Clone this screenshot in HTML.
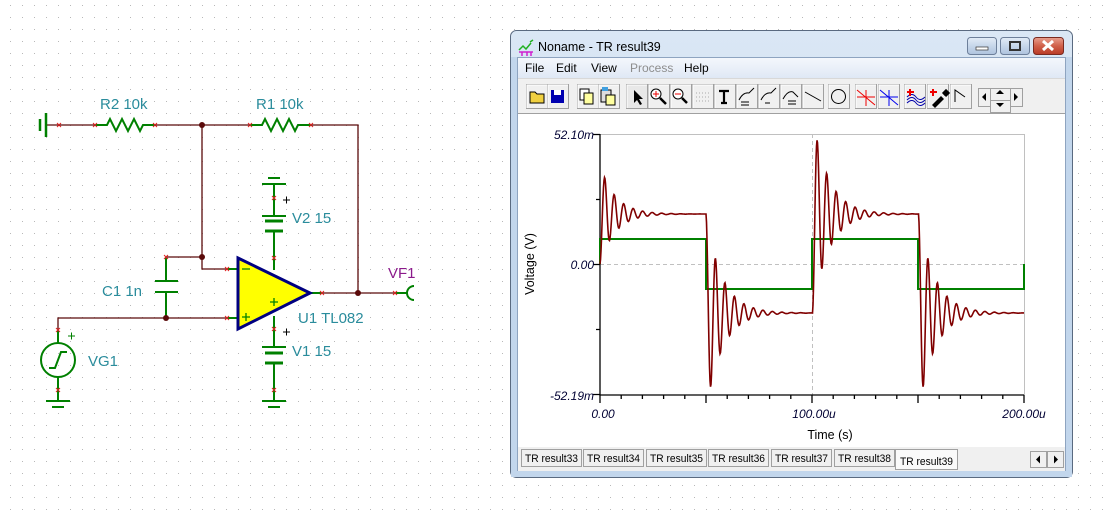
<!DOCTYPE html>
<html><head><meta charset="utf-8"><style>
html,body{margin:0;padding:0;background:#fff;}
svg{display:block;font-family:"Liberation Sans",sans-serif;}
svg text{fill:#000;}
</style></head><body>
<svg id="s" width="1106" height="511" viewBox="0 0 1106 511" xmlns="http://www.w3.org/2000/svg">
<defs>
<pattern id="dots" x="10" y="5" width="12" height="12" patternUnits="userSpaceOnUse"><rect width="1" height="1" fill="#b8b8b8"/></pattern>
<linearGradient id="tb" x1="0" y1="0" x2="0" y2="1"><stop offset="0" stop-color="#dae7f5"/><stop offset="1" stop-color="#c2d6ec"/></linearGradient>
<linearGradient id="mb" x1="0" y1="0" x2="0" y2="1"><stop offset="0" stop-color="#f4f7fc"/><stop offset="1" stop-color="#dfe8f5"/></linearGradient>
<linearGradient id="btn" x1="0" y1="0" x2="0" y2="1"><stop offset="0" stop-color="#e3ecf7"/><stop offset="0.5" stop-color="#c6d6ea"/><stop offset="1" stop-color="#aec3de"/></linearGradient>
<linearGradient id="cls" x1="0" y1="0" x2="0" y2="1"><stop offset="0" stop-color="#e8a090"/><stop offset="0.5" stop-color="#d0604a"/><stop offset="1" stop-color="#b83a25"/></linearGradient>
</defs>
<rect width="1106" height="511" fill="#fff"/>
<rect width="1106" height="511" fill="url(#dots)"/>

<g fill="none" stroke-width="1.3">
<g stroke="#5a0a0a">
<path d="M46 125H95M155 125H250M311 125H358V293M202 125V269H227M202 257H166M58 330V318H227M322 293H395"/>
</g>
<g stroke="#008000" stroke-width="2">
<path d="M40 119V131" stroke-width="2.5"/>
<path d="M46 113V137" stroke-width="2.5"/>
<path d="M95 125H107l3-6 6 12 6-12 6 12 6-12 6 12 3-6H155"/>
<path d="M250 125H262l3-6 6 12 6-12 6 12 6-12 6 12 3-6H311"/>
<path d="M166 257V281M155 281H178M155 292H178M166 292V318"/>
<path d="M227 269H238M227 318H238M310 293H322M395 293H408"/>
<path d="M414 286a7 7 0 0 0 0 14"/>
<path d="M268 178H280M262 184H286M274 184V216M262 216H286M274 231V258"/>
<path d="M265 221H283M265 231H283" stroke-width="3"/>
<path d="M274 329V347M262 347H286M274 363V401M262 401H286M268 407H280"/>
<path d="M265 353H283M265 363H283" stroke-width="3"/>
<circle cx="58" cy="360" r="17"/>
<path d="M58 330V343M58 377V401M46 401H70M52 407H64"/>
<path d="M49 368H55L61 352H67"/>
</g>
</g>
<path d="M238 258L310 293L238 329Z" fill="#ffff00" stroke="#000080" stroke-width="3"/>
<path d="M274 258V270M274 316V329" stroke="#008000" stroke-width="2"/>
<g stroke="#008000" stroke-width="1.3"><path d="M242 269H250M242 317H250M246 313V321M270 302H278M274 298V306"/></g>
<g fill="#5a0a0a"><circle cx="202" cy="125" r="3"/><circle cx="202" cy="257" r="3"/><circle cx="166" cy="318" r="3"/><circle cx="358" cy="293" r="3"/></g>
<g stroke="#e02020" stroke-width="1" fill="none" id="xs"></g>
<g stroke="#000" stroke-width="1"><path d="M283 200h7M286.5 196.5v7M283 332h7M286.5 328.5v7"/></g>
<g stroke="#008000" stroke-width="1"><path d="M68 336h7M71.5 332.5v7"/></g>
<g font-size="15">
<text x="100" y="109" style="fill:#2a8c9c">R2 10k</text>
<text x="256" y="109" style="fill:#2a8c9c">R1 10k</text>
<text x="102" y="296" style="fill:#2a8c9c">C1 1n</text>
<text x="292" y="223" style="fill:#2a8c9c">V2 15</text>
<text x="292" y="356" style="fill:#2a8c9c">V1 15</text>
<text x="298" y="323" style="fill:#2a8c9c">U1 TL082</text>
<text x="88" y="366" style="fill:#2a8c9c">VG1</text>
</g>
<text x="388" y="278" font-size="15" style="fill:#8b1a8b">VF1</text>

<rect x="510.5" y="30.5" width="562" height="447" rx="6" fill="url(#tb)" stroke="#5a6a80"/>
<rect x="511" y="57" width="561" height="420" fill="#c2d6ec"/>
<rect x="517.5" y="57.5" width="548" height="413" fill="#f0f0f0" stroke="#8ea4c0"/>
<rect x="518" y="58" width="547" height="20" fill="url(#mb)"/>
<g fill="none" stroke-width="1.5"><path d="M519 50l4-4 3 3 5-6M533 40l-3 2" stroke="#20b020"/><path d="M519 52h14M522 52v4M527 52v4M531 52v4" stroke="#d020d0"/></g>
<text x="538" y="51" font-size="12.5">Noname - TR result39</text>
<rect x="967.5" y="37.5" width="29" height="17" rx="3" fill="url(#btn)" stroke="#6d7f9a"/>
<rect x="976" y="47" width="12" height="3" fill="#fff" stroke="#333" stroke-width="0.7"/>
<rect x="1000.5" y="37.5" width="29" height="17" rx="3" fill="url(#btn)" stroke="#6d7f9a"/>
<rect x="1010" y="42" width="10" height="8" fill="none" stroke="#333" stroke-width="2"/>
<rect x="1033.5" y="37.5" width="30" height="17" rx="3" fill="url(#cls)" stroke="#7a2a20"/>
<path d="M1043 41l10 9M1053 41l-10 9" stroke="#fff" stroke-width="3"/>
<g font-size="12">
<text x="525" y="72">File</text><text x="556" y="72">Edit</text><text x="591" y="72">View</text>
<text x="630" y="72" style="fill:#8d8d8d">Process</text><text x="684" y="72">Help</text>
</g>
<line x1="518" y1="78.5" x2="1065" y2="78.5" stroke="#d8d8d8"/>
<g id="tbar"></g>
<rect x="518" y="113" width="547" height="334" fill="#fff"/>
<line x1="518" y1="113.5" x2="1065" y2="113.5" stroke="#a0a0a0"/>
<g stroke="#c0c0c0" fill="none">
<path d="M600 134.5H1024.5V395"/>
<path d="M600 264.5H1024M812.5 134V395" stroke-dasharray="4 3"/>
</g>
<g stroke="#000" stroke-width="1.3" fill="none" id="axes"><path d="M600 134V395H1024M593 134.5H600M593 264.5H600M593 394.5H600M596 199.5H600M596 329.5H600"/></g>
<path id="green" fill="none" stroke="#008000" stroke-width="2" d="M600 264V239H706V289H812V239H918V289H1024V264"/>
<path id="red" fill="none" stroke="#800000" stroke-width="1.6" d=""/>
<g font-size="12" font-style="italic">
<text x="594" y="139" text-anchor="end" style="fill:#000033">52.10m</text>
<text x="594" y="269" text-anchor="end" style="fill:#000033">0.00</text>
<text x="594" y="400" text-anchor="end" style="fill:#000033">-52.19m</text>
<text x="603" y="418" text-anchor="middle" style="fill:#000033">0.00</text>
<text x="814" y="418" text-anchor="middle" style="fill:#000033">100.00u</text>
<text x="1024" y="418" text-anchor="middle" style="fill:#000033">200.00u</text>
</g>
<text x="830" y="439" font-size="12.5" text-anchor="middle" style="fill:#000">Time (s)</text>
<text transform="translate(534 264) rotate(-90)" font-size="12.5" text-anchor="middle" style="fill:#000">Voltage (V)</text>
<rect x="518" y="447" width="547" height="24" fill="#f0f0f0"/>
<g id="tabs" font-size="11"></g>
</svg>
<script>
var ns="http://www.w3.org/2000/svg";
function el(p,t,a,txt){var e=document.createElementNS(ns,t);for(var k in a)e.setAttribute(k,a[k]);if(txt)e.appendChild(document.createTextNode(txt));p.appendChild(e);return e;}
var xs=document.getElementById('xs'),pts=[[59,125],[95,125],[155,125],[250,125],[311,125],[166,257],[227,269],[227,318],[274,198],[274,258],[274,329],[274,390],[322,293],[395,293],[58,330],[58,390]];
var d='';pts.forEach(function(p){d+='M'+(p[0]-2)+' '+(p[1]-2)+'l4 4M'+(p[0]+2)+' '+(p[1]-2)+'l-4 4';});el(xs,'path',{d:d});
var ax=document.getElementById('axes'),td='';
for(var i=0;i<=20;i++){var x=600+i*21.2;td+='M'+x.toFixed(1)+' 395V'+(i%5==0?403:399);}
el(ax,'path',{d:td});
var rd='M600 264';
function seg(x0,x1,base,A,tau){for(var x=x0;x<=x1;x+=0.5){var t=x-x0;var y=base+A*Math.exp(-t/tau)*Math.cos(2*Math.PI*t/9.5);rd+='L'+x.toFixed(1)+' '+y.toFixed(1);}}
seg(600,705.5,214,50,15);seg(706,812,313,-99,16);seg(812.5,918,214,99,16);seg(918.5,1024,313,-99,16);
document.getElementById('red').setAttribute('d',rd);
var tb=document.getElementById('tbar');
var bx=[526,547,577,598,626,648,670,692,714,736,758,780,802,828,855,878,904,927,950];
bx.forEach(function(x,i){el(tb,'rect',{x:x+.5,y:84.5,width:21,height:24,fill:(i==4?'#e8e8e8':'#f0f0f0'),stroke:'#a0a0a0'});el(tb,'path',{d:'M'+(x+1)+' 108V85H'+(x+21),stroke:'#fff',fill:'none'});});
var ic=[
'<path d="M530 103V92h5l2 2h7v9z" fill="#f0d040" stroke="#000"/>',
'<rect x="551" y="90" width="13" height="13" fill="#0000b0"/><rect x="554" y="90" width="7" height="5" fill="#fff"/>',
'<rect x="580" y="89" width="9" height="11" fill="#fff" stroke="#000"/><rect x="584" y="93" width="9" height="11" fill="#ffffa0" stroke="#000"/>',
'<rect x="601" y="90" width="10" height="12" fill="#ddd" stroke="#000"/><rect x="606" y="95" width="9" height="10" fill="#ffffa0" stroke="#000"/><rect x="602" y="87" width="6" height="4" fill="#40a0e0"/>',
'<path d="M634 90v13l3-3 3 5 2-1-3-5h4z" fill="#000"/>',
'<circle cx="656" cy="94" r="5" fill="#fff" stroke="#000"/><path d="M660 98l6 6" stroke="#000" stroke-width="2.5"/><path d="M653 94h6M656 91v6" stroke="#e00"/>',
'<circle cx="678" cy="94" r="5" fill="#fff" stroke="#000"/><path d="M682 98l5 5" stroke="#000" stroke-width="2.5"/><path d="M675 94h6" stroke="#e00"/>',
'<path d="M696 93h14M696 97h14M696 101h14" stroke="#aaa" stroke-dasharray="1 2"/>',
'<path d="M719 91h10M724 91v12M721 103h6" stroke="#000" stroke-width="2.2" fill="none"/>',
'<path d="M739 100q4-8 10-7l5-5" stroke="#000" fill="none"/><path d="M741 102h8M741 105h8" stroke="#000"/>',
'<path d="M761 100q4-8 10-7l5-5" stroke="#000" fill="none"/><path d="M765 103h5" stroke="#000"/>',
'<path d="M783 99q5-9 10-7l5 5" stroke="#000" fill="none"/><path d="M788 101h8M788 104h8" stroke="#000"/>',
'<path d="M805 92l16 9" stroke="#000"/>',
'<circle cx="838.5" cy="96.5" r="7" fill="none" stroke="#000"/>',
'<path d="M857 90l18 15M857 97h18M866 90v16" stroke="#e00"/>',
'<path d="M880 90l18 15M880 97h18M889 90v16" stroke="#00e"/>',
'<path d="M907 100q5-5 9 0t9 0M907 103q5-5 9 0t9 0M907 97q5-5 9 0t9 0" stroke="#00a" fill="none"/><path d="M910 89v7M907 92h7" stroke="#e00" stroke-width="2"/>',
'<path d="M932 105l9-9 3 3-9 9z" fill="#000"/><path d="M943 94l3-3 2 2-3 3" stroke="#000" stroke-width="3"/><path d="M933 89v7M930 92h7" stroke="#e00" stroke-width="2"/>',
'<path d="M955 102V90l10 7" stroke="#000" fill="none"/>'
];
tb.insertAdjacentHTML('beforeend',ic.join(''));
[[978,12],[990,20],[1010,12]].forEach(function(b){el(tb,'rect',{x:b[0]+.5,y:88.5,width:b[1],height:b[0]==990?24:18,fill:'#f0f0f0',stroke:'#a0a0a0'});});
tb.insertAdjacentHTML('beforeend','<path d="M982 97l4-4v8z" fill="#000"/><path d="M996 94l4-4 4 4z M996 103l4 4 4-4z" fill="#000"/><path d="M1018 97l-4-4v8z" fill="#000"/><line x1="990" y1="100.5" x2="1010" y2="100.5" stroke="#a0a0a0"/>');
var tabs=document.getElementById('tabs');
var tx=[521,583,646,708,771,834];
tx.forEach(function(x,i){el(tabs,'rect',{x:x+.5,y:449.5,width:60,height:17,fill:'#f0f0f0',stroke:'#a0a0a0'});el(tabs,'text',{x:x+4,y:462,textLength:53,lengthAdjust:'spacingAndGlyphs',style:'fill:#000'},'TR result'+(33+i));});
el(tabs,'rect',{x:895.5,y:449.5,width:62,height:20,fill:'#fafafa',stroke:'#a0a0a0'});
el(tabs,'text',{x:900,y:465,textLength:53,lengthAdjust:'spacingAndGlyphs',style:'fill:#000'},'TR result39');
el(tabs,'rect',{x:1030.5,y:451.5,width:16,height:16,fill:'#f0f0f0',stroke:'#a0a0a0'});
el(tabs,'rect',{x:1047.5,y:451.5,width:16,height:16,fill:'#f0f0f0',stroke:'#a0a0a0'});
tabs.insertAdjacentHTML('beforeend','<path d="M1036 459.5l4-4v8z" fill="#000"/><path d="M1058 459.5l-4-4v8z" fill="#000"/>');
</script>
</body></html>
